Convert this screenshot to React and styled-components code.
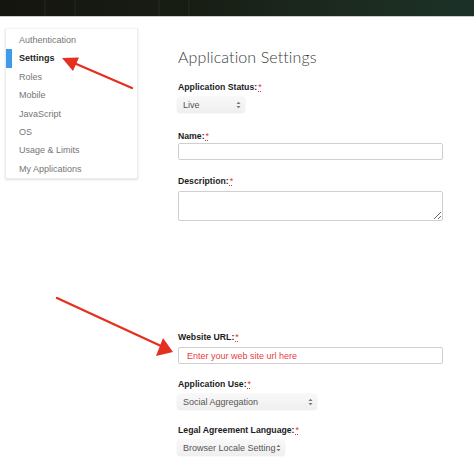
import React from 'react';
import styled, { createGlobalStyle } from 'styled-components';

const GlobalStyle = createGlobalStyle`
  html, body {
    margin: 0;
    padding: 0;
    background: #ffffff;
  }
  body {
    font-family: "Liberation Sans", Arial, sans-serif;
    width: 474px;
    height: 467px;
    overflow: hidden;
  }
`

const Page = styled.div`
  position:         relative;
  width:            474px;
  height:           467px;
  overflow:         hidden;
`

const TopBar = styled.div`
  height:           16px;
  border-bottom:    1px solid #c9cbc6;
  background:
    linear-gradient(90deg, rgba(255,255,255,0) 44px, rgba(255,255,255,0.06) 45px, rgba(255,255,255,0) 46px),
    linear-gradient(90deg, rgba(255,255,255,0) 74px, rgba(255,255,255,0.06) 75px, rgba(255,255,255,0) 76px),
    linear-gradient(90deg, rgba(255,255,255,0) 158px, rgba(255,255,255,0.07) 159px, rgba(255,255,255,0) 160px),
    linear-gradient(90deg, rgba(255,255,255,0) 188px, rgba(255,255,255,0.06) 189px, rgba(255,255,255,0) 190px),
    linear-gradient(90deg, #14150f 0%, #181d14 40%, #1c2b20 75%, #1b3127 100%);
`

const Layout = styled.div`
  display:          flex;
  flex-direction:   row;
  align-items:      flex-start;
`

const Sidebar = styled.ul`
  list-style:       none;
  margin:           11px 0 0 5px;
  padding:          2px 0 0 0;
  width:            133px;
  background:       #ffffff;
  border:           1px solid #ececec;
  border-top-color: #f4f4f4;
  box-shadow:       0 1px 2px rgba(0,0,0,0.12);
  box-sizing:       border-box;
`

const NavItem = styled.li`
  position:         relative;
  height:           18.4px;
  line-height:      18.4px;
  padding-left:     13px;
  font-size:        9px;
  color:            ${p => p.$active ? '#1f1f1f' : '#767676'};
  font-weight:      ${p => p.$active ? 700 : 400};
  white-space:      nowrap;

  &::before {
    content:        '';
    display:        ${p => p.$active ? 'block' : 'none'};
    position:       absolute;
    left:           0;
    top:            0;
    width:          6px;
    height:         19px;
    background:     #3d9be9;
  }
`

const Main = styled.div`
  margin-left:      40px;
  padding-top:      30px;
  width:            266px;
`

const Title = styled.h1`
  margin:           0 0 14px 0;
  font-family:      Lato, "Open Sans", sans-serif;
  font-weight:      300;
  font-size:        16px;
  line-height:      20px;
  color:            #3a3a3a;
  letter-spacing:   0.1px;
`

const Field = styled.div`
  margin-bottom:    ${p => p.$after || 14}px;
`

const Label = styled.label`
  display:          block;
  font-size:        8.7px;
  font-weight:      700;
  line-height:      12px;
  color:            #1c1c1c;
  margin-bottom:    ${p => p.$tight ? 1 : 4}px;
`

const Req = styled.abbr`
  color:            #e0332a;
  text-decoration:  underline dotted;
  margin-left:      1px;
  font-weight:      400;
`

const TextInput = styled.input`
  display:          block;
  box-sizing:       border-box;
  width:            265px;
  height:           17px;
  margin:           0;
  padding:          0 8px;
  border:           1px solid #cfcfcf;
  border-radius:    2px;
  font-family:      "Liberation Sans", Arial, sans-serif;
  font-size:        9px;
  color:            #333;
  outline:          none;
  background:       #fff;

  &::placeholder {
    color:          #e8403f;
    opacity:        1;
  }
`

const TextArea = styled.textarea`
  display:          block;
  box-sizing:       border-box;
  width:            265px;
  height:           30px;
  margin:           0;
  padding:          2px 4px;
  border:           1px solid #cfcfcf;
  border-radius:    2px;
  font-family:      "Liberation Sans", Arial, sans-serif;
  font-size:        9px;
  outline:          none;
`

const SelectBox = styled.div`
  display:          flex;
  align-items:      center;
  justify-content:  space-between;
  box-sizing:       border-box;
  width:            ${p => p.$width}px;
  height:           16px;
  margin-left:      -1px;
  padding:          0 4px 0 6px;
  border-radius:    3px;
  background:       linear-gradient(#f8f8f8, #efefef);
  box-shadow:       0 0 0 0.5px rgba(0,0,0,0.05);
  font-size:        9px;
  color:            #555;
  white-space:      nowrap;
`

const Chevrons = () => (
  <svg width="5" height="8" viewBox="0 0 5 8">
    <path d="M0.5 3 L2.5 0.8 L4.5 3 Z" fill="#777" />
    <path d="M0.5 5 L2.5 7.2 L4.5 5 Z" fill="#777" />
  </svg>
)

const Select = ({ width, value }) => (
  <SelectBox $width={width}>
    <span>{value}</span>
    <Chevrons />
  </SelectBox>
)

const Arrows = styled.svg`
  position:         absolute;
  left:             0;
  top:              0;
  pointer-events:   none;
`

const navItems = [
  'Authentication',
  'Settings',
  'Roles',
  'Mobile',
  'JavaScript',
  'OS',
  'Usage & Limits',
  'My Applications'
]

export default function App() {
  return (
    <Page>
      <GlobalStyle />
      <TopBar />
      <Layout>
        <Sidebar>
          {navItems.map(name => (
            <NavItem key={name} $active={name === 'Settings'}>{name}</NavItem>
          ))}
        </Sidebar>
        <Main>
          <Title>Application Settings</Title>

          <Field $after={17}>
            <Label>Application Status:<Req title="required">*</Req></Label>
            <Select width={68} value="Live" />
          </Field>

          <Field $after={15}>
            <Label $tight>Name:<Req title="required">*</Req></Label>
            <TextInput type="text" />
          </Field>

          <Field $after={110}>
            <Label>Description:<Req title="required">*</Req></Label>
            <TextArea />
          </Field>

          <Field>
            <Label>Website URL:<Req title="required">*</Req></Label>
            <TextInput type="text" placeholder="Enter your web site url here" />
          </Field>

          <Field>
            <Label>Application Use:<Req title="required">*</Req></Label>
            <Select width={140} value="Social Aggregation" />
          </Field>

          <Field>
            <Label>Legal Agreement Language:<Req title="required">*</Req></Label>
            <Select width={108} value="Browser Locale Setting" />
          </Field>
        </Main>
      </Layout>

      <Arrows width="474" height="467" viewBox="0 0 474 467">
        <line x1="132" y1="88" x2="74" y2="63" stroke="#e5301f" strokeWidth="2.4" strokeLinecap="round" />
        <polygon points="62,58 79,57.5 73,71" fill="#e5301f" />
        <line x1="57" y1="298" x2="161" y2="346" stroke="#e5301f" strokeWidth="2.4" strokeLinecap="round" />
        <polygon points="173,352 156,356 163,338" fill="#e5301f" />
      </Arrows>
    </Page>
  );
}
